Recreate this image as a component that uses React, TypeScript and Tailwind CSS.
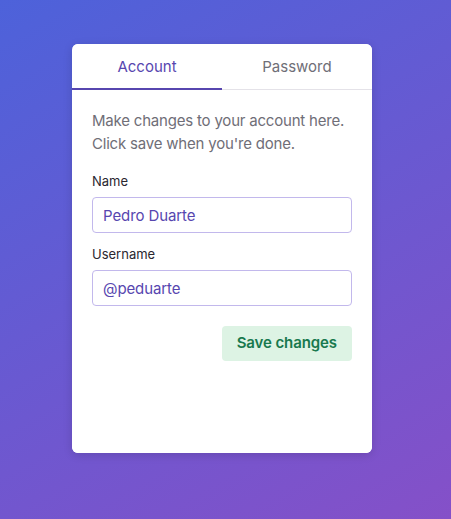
import * as Tabs from '@radix-ui/react-tabs';

const font = { fontFamily: 'Inter, "Liberation Sans", sans-serif' };

export default function App() {
  return (
    <div
      className="min-h-screen w-full bg-[linear-gradient(330deg,#8550c8_0%,#4d62da_100%)] pl-[72px] pt-[44px]"
      style={font}
    >
      <Tabs.Root
        defaultValue="account"
        className="flex h-[409px] w-[300px] flex-col rounded-[6px] bg-white shadow-[0_2px_10px_rgba(0,0,0,0.14)]"
      >
        <Tabs.List className="flex shrink-0 border-b border-[#e4e2e8]">
          <Tabs.Trigger
            value="account"
            className="flex h-[45px] flex-1 items-center justify-center rounded-tl-[6px] bg-white text-[15px] leading-none text-[#6f6e77] data-[state=active]:text-[#5746af] data-[state=active]:shadow-[inset_0_-1px_0_0_currentColor,0_1px_0_0_currentColor]"
          >
            Account
          </Tabs.Trigger>
          <Tabs.Trigger
            value="password"
            className="flex h-[45px] flex-1 items-center justify-center rounded-tr-[6px] bg-white text-[15px] leading-none text-[#6f6e77] data-[state=active]:text-[#5746af] data-[state=active]:shadow-[inset_0_-1px_0_0_currentColor,0_1px_0_0_currentColor]"
          >
            Password
          </Tabs.Trigger>
        </Tabs.List>

        <Tabs.Content value="account" className="grow rounded-b-[6px] bg-white p-5 outline-none">
          <p className="mb-5 text-[15px] leading-[22.5px] tracking-[-0.2px] text-[#6f6e77]">
            Make changes to your account here. Click save when you're done.
          </p>
          <fieldset className="mb-[15px] flex flex-col">
            <label htmlFor="name" className="mb-[9px] block text-[13px] leading-[13px] text-[#2a2730]">
              Name
            </label>
            <input
              id="name"
              defaultValue="Pedro Duarte"
              className="h-[36px] w-full rounded-[4px] border border-[#c2b8ec] px-[10px] text-[15px] tracking-[-0.1px] text-[#5746af] outline-none"
            />
          </fieldset>
          <fieldset className="flex flex-col">
            <label htmlFor="username" className="mb-[9px] block text-[13px] leading-[13px] text-[#2a2730]">
              Username
            </label>
            <input
              id="username"
              defaultValue="@peduarte"
              className="h-[36px] w-full rounded-[4px] border border-[#c2b8ec] px-[10px] text-[15px] tracking-[-0.1px] text-[#5746af] outline-none"
            />
          </fieldset>
          <div className="mt-5 flex justify-end">
            <button className="h-[35px] rounded-[4px] bg-[#ddf3e4] px-[15px] text-[15px] font-semibold tracking-[-0.1px] text-[#18794e]">
              Save changes
            </button>
          </div>
        </Tabs.Content>
        <Tabs.Content value="password" className="grow p-5" />
      </Tabs.Root>
    </div>
  );
}
